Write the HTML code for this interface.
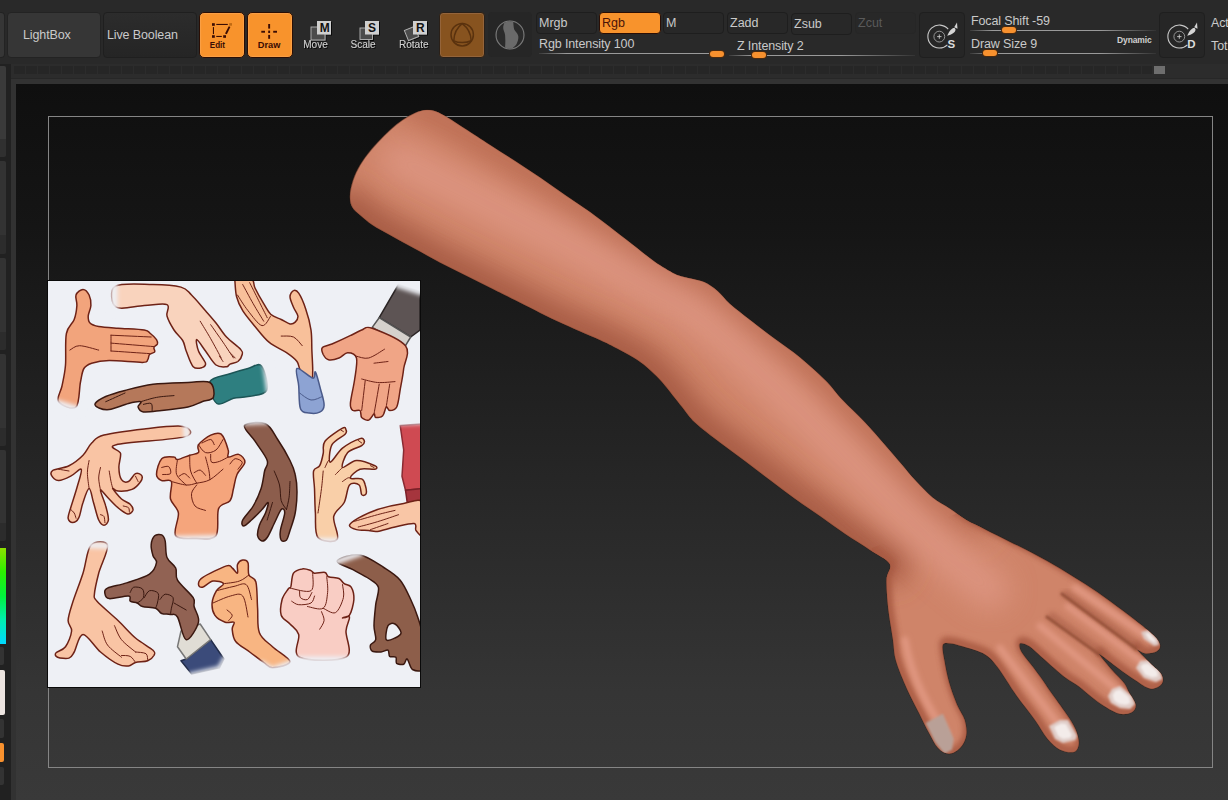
<!DOCTYPE html>
<html>
<head>
<meta charset="utf-8">
<title>ZBrush</title>
<style>
html,body{margin:0;padding:0;}
html{overflow:hidden;width:1228px;height:800px;}
body{width:1228px;height:800px;overflow:hidden;background:#272727;font-family:"Liberation Sans",sans-serif;position:relative;}
.abs{position:absolute;}
#top{position:absolute;left:0;top:0;width:1228px;height:64px;background:#292929;}
.btn{position:absolute;top:13px;height:44px;border-radius:4px;box-sizing:border-box;color:#c8c8c8;font-size:12.5px;}
.btn.grey{background:#363636;border:1px solid #232323;}
.btn.dark{background:linear-gradient(#2c2c2c,#252525);border:1px solid #1f1f1f;}
.btn.or{background:#f8912e;border:1px solid #3a2410;}
.lbl{position:absolute;white-space:nowrap;color:#cacaca;font-size:12.5px;line-height:13px;letter-spacing:-0.12px;}
.sm{position:absolute;top:12px;height:22px;width:61px;box-sizing:border-box;border-radius:4px;border:1px solid #1e1e1e;background:#282828;color:#cacaca;font-size:12.5px;line-height:21px;padding-left:2px;}
.line{position:absolute;height:1px;background:linear-gradient(90deg,#8a8a8a,#8a8a8a 70%,#3a3a3a);}
.hnd{position:absolute;width:14px;height:6px;border-radius:3px;background:#f8912e;box-shadow:0 0 0 1px #4a2a10;}
#strip{position:absolute;left:0;top:64px;width:1228px;height:14px;background:#2c2c2c;}
#canvas{position:absolute;left:11px;top:79px;width:1217px;height:721px;background:#323232;}
#cv{position:absolute;left:16px;top:84px;width:1212px;height:716px;background:linear-gradient(#0f0f0f,#151515 20%,#262626 55%,#353535 85%,#393939);overflow:hidden;}
</style>
</head>
<body>
<div id="top"></div>
<div id="strip"></div>
<div id="canvas"></div>
<div id="cv"></div>
<!-- frame -->
<div class="abs" style="left:48px;top:116px;width:1165px;height:652px;box-sizing:border-box;border:1px solid #858585;"></div>
<svg class="abs" style="left:16px;top:84px" width="1212" height="716" viewBox="16 84 1212 716">
<defs>
<path id="armp" d="M426.0 110.0 C429.5 109.8 432.4 110.2 436.0 111.5 C439.6 112.8 442.7 114.6 447.5 117.5 C452.3 120.4 457.9 124.2 465.0 128.8 C472.1 133.3 481.7 139.6 490.0 145.0 C498.3 150.4 506.7 155.6 515.0 161.0 C523.3 166.4 531.7 171.8 540.0 177.5 C548.3 183.2 556.7 189.2 565.0 195.0 C573.3 200.8 581.7 206.0 590.0 212.0 C598.3 218.0 607.2 225.0 615.0 231.0 C622.8 237.0 630.3 242.8 637.0 248.0 C643.7 253.2 648.7 257.7 655.0 262.0 C661.3 266.3 669.5 271.3 675.0 274.0 C680.5 276.7 683.2 276.7 688.0 278.0 C692.8 279.3 699.1 279.8 704.0 282.0 C708.9 284.2 713.2 287.3 717.5 291.0 C721.8 294.7 724.6 299.2 730.0 304.0 C735.4 308.8 742.5 314.2 750.0 320.0 C757.5 325.8 766.7 332.8 775.0 339.0 C783.3 345.2 791.7 350.7 800.0 357.5 C808.3 364.3 817.9 372.9 825.0 380.0 C832.1 387.1 835.8 392.9 842.5 400.0 C849.2 407.1 857.9 415.0 865.0 422.5 C872.1 430.0 879.2 438.3 885.0 445.0 C890.8 451.7 895.0 456.7 900.0 462.5 C905.0 468.3 909.6 474.2 915.0 480.0 C920.4 485.8 926.7 492.7 932.5 497.5 C938.3 502.3 944.4 505.0 950.0 508.8 C955.6 512.5 960.4 516.6 966.2 520.0 C972.1 523.4 977.7 525.7 985.0 529.4 C992.3 533.0 1001.7 537.7 1010.0 541.9 C1018.3 546.0 1026.7 549.9 1035.0 554.4 C1043.3 558.8 1051.7 563.5 1060.0 568.4 C1068.3 573.4 1076.7 578.6 1085.0 584.1 C1093.3 589.5 1101.7 595.3 1110.0 601.2 C1118.3 607.2 1127.7 614.3 1135.0 620.0 C1142.3 625.7 1149.6 631.5 1153.8 635.6 C1157.9 639.8 1159.5 642.4 1160.0 645.0 C1160.5 647.6 1159.2 649.8 1156.9 651.2 C1154.5 652.7 1149.1 653.6 1145.9 653.4 C1142.8 653.2 1139.7 650.8 1138.0 650.0 C1136.3 649.2 1135.2 647.5 1136.0 648.5 C1136.8 649.5 1140.6 653.5 1143.0 656.0 C1145.4 658.5 1147.5 660.6 1150.6 663.8 C1153.7 666.9 1159.7 671.3 1161.6 674.7 C1163.4 678.1 1163.4 681.7 1161.6 684.1 C1159.7 686.4 1155.1 689.4 1150.6 688.8 C1146.2 688.1 1140.4 683.5 1135.0 680.0 C1129.6 676.5 1123.7 672.2 1118.0 668.0 C1112.3 663.8 1104.0 657.1 1101.0 655.0 C1098.0 652.9 1098.2 653.0 1100.0 655.5 C1101.8 658.0 1108.0 665.4 1112.0 670.0 C1116.0 674.6 1121.2 679.4 1124.0 683.0 C1126.8 686.6 1126.8 688.3 1128.8 691.9 C1130.7 695.4 1135.1 701.0 1135.6 704.4 C1136.1 707.8 1134.6 710.6 1131.9 712.2 C1129.2 713.8 1124.0 714.8 1119.4 713.8 C1114.7 712.7 1108.7 708.9 1104.0 706.0 C1099.3 703.1 1095.2 699.8 1091.0 696.5 C1086.8 693.2 1083.2 689.6 1079.0 686.5 C1074.8 683.4 1070.2 681.1 1066.0 678.0 C1061.8 674.9 1058.2 671.6 1054.0 668.0 C1049.8 664.4 1045.2 660.2 1041.0 656.5 C1036.8 652.8 1032.5 648.2 1029.0 646.0 C1025.5 643.8 1021.2 642.5 1020.0 643.5 C1018.8 644.5 1019.3 648.1 1021.5 652.0 C1023.7 655.9 1029.5 662.3 1033.0 667.0 C1036.5 671.7 1039.5 675.8 1042.5 680.0 C1045.5 684.2 1047.0 686.9 1051.0 692.5 C1055.0 698.1 1062.1 707.6 1066.2 713.8 C1070.4 719.9 1073.5 724.4 1075.6 729.4 C1077.7 734.3 1079.0 739.7 1078.8 743.4 C1078.5 747.2 1077.2 750.8 1074.1 751.9 C1070.9 752.9 1064.4 751.9 1060.0 749.7 C1055.6 747.5 1051.7 743.7 1047.5 738.8 C1043.3 733.8 1040.2 727.3 1035.0 720.0 C1029.8 712.7 1022.5 703.9 1016.2 695.0 C1010.0 686.1 1002.7 673.6 997.5 666.9 C992.3 660.1 990.7 657.8 985.0 654.4 C979.3 651.0 968.9 648.4 963.1 646.6 C957.4 644.7 954.0 643.7 950.6 643.4 C947.2 643.2 943.9 642.1 942.8 645.0 C941.8 647.9 943.3 654.4 944.4 660.6 C945.4 666.9 947.0 675.2 949.1 682.5 C951.1 689.8 954.3 698.1 956.9 704.4 C959.5 710.6 963.1 714.8 964.7 720.0 C966.2 725.2 967.0 730.9 966.2 735.6 C965.5 740.3 962.9 745.1 960.0 748.1 C957.1 751.1 952.7 753.8 949.1 753.8 C945.4 753.8 941.5 751.7 938.1 748.1 C934.7 744.6 931.9 738.2 928.8 732.5 C925.6 726.8 923.0 721.0 919.4 713.8 C915.7 706.5 910.8 697.6 906.9 688.8 C903.0 679.9 898.3 669.0 895.9 660.6 C893.6 652.3 894.1 647.6 892.8 638.8 C891.5 629.9 889.2 617.4 888.1 607.5 C887.1 597.6 886.3 586.7 886.6 579.4 C886.8 572.1 892.4 568.6 889.7 563.8 C886.9 558.9 877.4 555.0 870.0 550.0 C862.6 545.0 853.3 539.4 845.0 533.8 C836.7 528.1 828.3 521.8 820.0 516.0 C811.7 510.2 803.3 504.8 795.0 498.8 C786.7 492.8 778.3 486.3 770.0 480.0 C761.7 473.7 753.3 467.2 745.0 461.0 C736.7 454.8 728.3 448.9 720.0 442.5 C711.7 436.1 701.2 428.3 695.0 422.5 C688.8 416.7 686.2 412.1 682.5 407.5 C678.8 402.9 675.8 399.2 672.5 395.0 C669.2 390.8 666.2 386.7 662.5 382.5 C658.8 378.3 654.2 373.8 650.0 370.0 C645.8 366.2 642.5 363.3 637.5 360.0 C632.5 356.7 626.2 353.3 620.0 350.0 C613.8 346.7 610.5 344.8 600.0 340.0 C589.5 335.2 571.2 327.7 557.0 321.0 C542.8 314.3 526.2 305.6 515.0 300.0 C503.8 294.4 498.3 291.7 490.0 287.5 C481.7 283.3 473.3 279.2 465.0 275.0 C456.7 270.8 448.3 266.9 440.0 262.5 C431.7 258.1 423.3 253.3 415.0 248.8 C406.7 244.2 397.1 239.0 390.0 235.0 C382.9 231.0 377.5 228.3 372.5 225.0 C367.5 221.7 363.3 217.9 360.0 215.0 C356.7 212.1 354.2 210.2 352.5 207.5 C350.8 204.8 350.2 202.3 350.0 199.0 C349.8 195.7 350.0 191.9 351.0 187.5 C352.0 183.1 353.7 177.5 356.0 172.5 C358.3 167.5 361.4 162.5 365.0 157.5 C368.6 152.5 373.3 147.1 377.5 142.5 C381.7 137.9 385.8 133.8 390.0 130.0 C394.2 126.2 398.3 122.8 402.5 120.0 C406.7 117.2 411.1 114.7 415.0 113.0 C418.9 111.3 422.5 110.2 426.0 110.0 Z"/>
<clipPath id="upper"><path d="M300 80 L1000 80 L1000 500 L880 610 L700 600 L300 300 Z"/></clipPath>
<clipPath id="lower"><path d="M990 500 L1228 500 L1228 800 L860 800 L872 548 Z"/></clipPath>
<clipPath id="armclip"><use href="#armp"/></clipPath>
<filter id="b14" x="-10%" y="-10%" width="120%" height="120%"><feGaussianBlur stdDeviation="14"/></filter>
<filter id="b9" x="-10%" y="-10%" width="120%" height="120%"><feGaussianBlur stdDeviation="9"/></filter>
<filter id="b5" x="-10%" y="-10%" width="120%" height="120%"><feGaussianBlur stdDeviation="5"/></filter>
<filter id="b3" x="-10%" y="-10%" width="120%" height="120%"><feGaussianBlur stdDeviation="2.5"/></filter>
<filter id="b1" x="-10%" y="-10%" width="120%" height="120%"><feGaussianBlur stdDeviation="1"/></filter>
</defs>
<!--ARM-->
<use href="#armp" fill="#cf8469" stroke="#3a1c12" stroke-width="1.2" stroke-opacity="0.5"/>
<g clip-path="url(#armclip)">
<path d="M405.0 94.0 C408.5 96.7 420.8 107.1 426.0 110.0 C431.2 112.9 432.4 110.2 436.0 111.5 C439.6 112.8 442.7 114.6 447.5 117.5 C452.3 120.4 457.9 124.2 465.0 128.8 C472.1 133.3 481.7 139.6 490.0 145.0 C498.3 150.4 506.7 155.6 515.0 161.0 C523.3 166.4 531.7 171.8 540.0 177.5 C548.3 183.2 556.7 189.2 565.0 195.0 C573.3 200.8 581.7 206.0 590.0 212.0 C598.3 218.0 607.2 225.0 615.0 231.0 C622.8 237.0 630.3 242.8 637.0 248.0 C643.7 253.2 648.7 257.7 655.0 262.0 C661.3 266.3 669.5 271.3 675.0 274.0 C680.5 276.7 683.2 276.7 688.0 278.0 C692.8 279.3 699.1 279.8 704.0 282.0 C708.9 284.2 713.2 287.3 717.5 291.0 C721.8 294.7 724.6 299.2 730.0 304.0 C735.4 308.8 742.5 314.2 750.0 320.0 C757.5 325.8 766.7 332.8 775.0 339.0 C783.3 345.2 791.7 350.7 800.0 357.5 C808.3 364.3 817.9 372.9 825.0 380.0 C832.1 387.1 835.8 392.9 842.5 400.0 C849.2 407.1 857.9 415.0 865.0 422.5 C872.1 430.0 879.2 438.3 885.0 445.0 C890.8 451.7 895.0 456.7 900.0 462.5 C905.0 468.3 909.6 474.2 915.0 480.0 C920.4 485.8 926.7 492.7 932.5 497.5 C938.3 502.3 941.2 503.7 950.0 508.8 C958.8 513.8 979.2 524.8 985.0 528.0" fill="none" stroke="#bc6d52" stroke-width="32" filter="url(#b14)"/>
<path d="M905.0 572.0 C899.2 568.3 880.0 556.4 870.0 550.0 C860.0 543.6 853.3 539.4 845.0 533.8 C836.7 528.1 828.3 521.8 820.0 516.0 C811.7 510.2 803.3 504.8 795.0 498.8 C786.7 492.8 778.3 486.3 770.0 480.0 C761.7 473.7 753.3 467.2 745.0 461.0 C736.7 454.8 728.3 448.9 720.0 442.5 C711.7 436.1 701.2 428.3 695.0 422.5 C688.8 416.7 686.2 412.1 682.5 407.5 C678.8 402.9 675.8 399.2 672.5 395.0 C669.2 390.8 666.2 386.7 662.5 382.5 C658.8 378.3 654.2 373.8 650.0 370.0 C645.8 366.2 642.5 363.3 637.5 360.0 C632.5 356.7 626.2 353.3 620.0 350.0 C613.8 346.7 610.5 344.8 600.0 340.0 C589.5 335.2 571.2 327.7 557.0 321.0 C542.8 314.3 526.2 305.6 515.0 300.0 C503.8 294.4 498.3 291.7 490.0 287.5 C481.7 283.3 473.3 279.2 465.0 275.0 C456.7 270.8 448.3 266.9 440.0 262.5 C431.7 258.1 423.3 253.3 415.0 248.8 C406.7 244.2 397.1 239.0 390.0 235.0 C382.9 231.0 377.5 228.3 372.5 225.0 C367.5 221.7 366.2 219.8 360.0 215.0 C353.8 210.2 339.2 199.2 335.0 196.0" fill="none" stroke="#a35740" stroke-width="34" filter="url(#b14)"/>
<g clip-path="url(#lower)"><use href="#armp" fill="none" stroke="#a85a42" stroke-width="9" filter="url(#b3)" transform="translate(1,-2)" opacity="0.85"/></g>
<path d="M400.0 160.0 C411.7 165.8 443.3 181.7 470.0 195.0 C496.7 208.3 531.7 225.3 560.0 240.0 C588.3 254.7 616.7 270.0 640.0 283.0 C663.3 296.0 680.0 303.2 700.0 318.0 C720.0 332.8 740.0 353.3 760.0 372.0 C780.0 390.7 800.0 410.3 820.0 430.0 C840.0 449.7 861.7 471.7 880.0 490.0 C898.3 508.3 911.7 523.3 930.0 540.0 C948.3 556.7 980.0 581.7 990.0 590.0" fill="none" stroke="#df9885" stroke-width="40" stroke-linecap="round" filter="url(#b14)" opacity="0.8"/>
<g fill="none" stroke="#e09680" stroke-width="7" stroke-linecap="round" filter="url(#b3)">
<path d="M1075 588 L1148 637"/><path d="M1068 606 L1150 668"/><path d="M1040 626 L1122 694"/><path d="M1000 648 L1064 732"/><path d="M905 640 C912 680 930 710 946 734"/>
</g>
<g fill="none" stroke="#a65c44" stroke-width="8" stroke-linecap="round" filter="url(#b3)" opacity="0.55"><path d="M1066 594 L1138 646"/><path d="M1052 616 L1102 652"/></g>
<g fill="none" stroke="#935039" stroke-width="3.2" stroke-linecap="round" filter="url(#b1)" opacity="0.9">
<path d="M1062 594 L1136 648.5"/><path d="M1047 617 L1100 655"/>
</g>
<g filter="url(#b1)">
<path d="M1141 632 L1148 630 L1158 639 L1159 645 L1154 646 L1144 639 Z" fill="#dcc8c3"/>
<path d="M1136 668 L1140 661 L1148 660 L1160 670 L1162.4 679 L1156 682 L1144 678 Z" fill="#dfccc7"/>
<path d="M1108 696 L1112 689 L1120 686 L1132 696 L1135 704 L1130 709 L1120 708 L1111 703 Z" fill="#e0cdc8"/>
<path d="M1049 726 L1060 720 L1068 720 L1077 735.6 L1075.6 740 L1063 743 L1055 739 Z" fill="#dfccc7"/>
<path d="M925.6 723 L942.8 713.75 L953.75 738.75 L952 749.7 L944.4 753.75 L935 742 Z" fill="#b9a097"/>
</g>
<g filter="url(#b1)" fill="#f3ecea">
<path d="M1145 633.5 L1149 633 L1155.5 640 L1155 643 L1149 639.5 Z"/>
<path d="M1140.5 667 L1143 664 L1148 663.5 L1157 671 L1158 676.5 L1152 677.5 L1145 674.5 Z"/>
<path d="M1112.5 695 L1115 691 L1120 689.5 L1129 697 L1130.5 703 L1126 705 L1119 704 L1114 700.5 Z"/>
<path d="M1054 727 L1061 723.5 L1066 724 L1072 735 L1070 738 L1063 739 L1058 736 Z"/>
</g>
</g>
</svg>
<svg class="abs" style="left:47px;top:280px" width="375" height="409" viewBox="47 280 375 409">
<defs><clipPath id="refclip"><rect x="48" y="281" width="372" height="406"/></clipPath>
<filter id="rb" x="-20%" y="-20%" width="140%" height="140%"><feGaussianBlur stdDeviation="2.2"/></filter></defs>
<rect x="47.5" y="280.5" width="373" height="407" fill="#eef0f5" stroke="#0a0a0a" stroke-width="1"/>
<g clip-path="url(#refclip)">
<path d="M115.4 286.2C121.5 282.5 142.1 284.4 153.0 284.5C163.9 284.6 174.6 285.4 181.0 287.1C187.4 288.9 187.4 291.1 191.5 295.0C195.6 298.9 201.4 306.1 205.5 310.7C209.6 315.4 212.5 318.6 216.0 323.0C219.5 327.4 222.4 332.6 226.5 337.0C230.6 341.4 237.9 346.3 240.5 349.2C243.1 352.2 242.7 352.4 242.2 354.5C241.8 356.5 239.9 359.9 237.9 361.5C235.8 363.1 231.9 363.2 230.0 364.1C228.1 365.0 228.8 366.6 226.5 366.7C224.1 366.9 219.5 367.6 216.0 365.0C212.5 362.4 208.7 355.2 205.5 351.0C202.3 346.8 197.9 339.6 196.7 339.6C195.6 339.6 197.0 347.1 198.5 351.0C199.9 354.9 204.9 360.5 205.5 363.2C206.1 366.0 204.0 367.0 202.0 367.6C199.9 368.2 195.9 369.5 193.2 366.7C190.6 364.0 188.0 355.4 186.2 351.0C184.5 346.6 184.8 344.0 182.7 340.5C180.7 337.0 176.6 334.1 174.0 330.0C171.4 325.9 168.2 320.2 167.0 316.0C165.8 311.8 170.8 306.4 167.0 304.6C163.2 302.9 152.7 305.1 144.2 305.5C135.8 305.9 121.1 310.5 116.2 307.2C111.4 304.0 109.2 290.0 115.4 286.2Z" fill="#f9d3bd" stroke="#6e2216" stroke-width="1.5" stroke-linejoin="round"/>
<path d="M200.2 321.2C202.0 324.2 207.2 332.6 210.7 338.7C214.2 344.9 219.5 354.8 221.2 358.0M210.7 324.7C212.8 327.7 219.2 336.7 223.0 342.2C226.8 347.8 231.7 355.4 233.5 358.0M219.5 356.2C220.1 357.1 222.4 360.6 223.0 361.5M230.0 352.7C230.9 353.6 234.4 357.1 235.2 358.0" fill="none" stroke="#6e2216" stroke-width="1.0" stroke-linecap="round"/>
<path d="M83.0 289.4C85.2 289.4 87.8 292.3 89.1 295.0C90.4 297.7 91.0 302.0 90.9 305.5C90.7 309.0 88.4 313.1 88.2 316.0C88.1 318.9 88.2 321.2 90.0 323.0C91.7 324.7 94.1 325.6 98.7 326.5C103.4 327.4 110.4 327.7 118.0 328.2C125.6 328.8 138.8 329.1 144.2 330.0C149.6 330.9 148.3 331.9 150.4 333.5C152.4 335.1 155.3 337.9 156.5 339.6C157.7 341.4 157.8 342.7 157.4 344.0C156.9 345.3 154.3 346.2 153.9 347.5C153.4 348.8 155.5 350.7 154.7 351.9C154.0 353.0 150.7 353.2 149.5 354.5C148.3 355.8 148.9 358.4 147.7 359.7C146.6 361.1 148.9 362.2 142.5 362.4C136.1 362.5 117.7 360.5 109.2 360.6C100.8 360.8 96.0 361.9 91.7 363.2C87.5 364.6 85.8 365.3 83.9 368.5C82.0 371.7 81.7 376.1 80.4 382.5C79.1 388.9 79.6 403.8 76.0 407.0C72.4 410.2 60.8 405.2 58.5 401.7C56.2 398.2 60.8 392.1 62.0 386.0C63.2 379.9 64.8 373.7 65.5 365.0C66.2 356.2 64.9 341.1 66.4 333.5C67.8 325.9 72.5 324.2 74.2 319.5C76.0 314.8 76.6 309.6 76.9 305.5C77.2 301.4 75.0 297.7 76.0 295.0C77.0 292.3 80.8 289.4 83.0 289.4Z" fill="#f2a47c" stroke="#6e2216" stroke-width="1.5" stroke-linejoin="round"/>
<path d="M111.0 335.2C117.7 335.5 144.5 336.7 151.2 337.0M111.0 343.1C118.1 343.7 146.7 346.0 153.9 346.6M111.0 351.0C117.4 351.4 143.1 353.2 149.5 353.6M111.0 335.2C111.0 337.9 111.0 348.4 111.0 351.0M69.9 350.1C71.5 349.4 74.7 345.7 79.5 345.7C84.3 345.7 95.5 349.4 98.7 350.1" fill="none" stroke="#6e2216" stroke-width="1.0" stroke-linecap="round"/>
<path d="M209.9 381.6C212.0 376.7 223.6 375.9 230.0 373.7C236.3 371.6 242.8 369.8 248.0 368.5C253.2 367.2 258.4 362.2 261.5 365.9C264.6 369.5 269.0 385.3 266.7 390.4C264.5 395.5 253.5 395.2 248.0 396.5C242.5 397.8 238.7 397.1 233.5 398.2C228.3 399.4 220.8 406.3 216.9 403.5C212.9 400.7 207.7 386.6 209.9 381.6Z" fill="#2e7f80" stroke="#1c5556" stroke-width="1.5" stroke-linejoin="round"/>
<path d="M95.2 403.5C96.4 401.6 100.8 398.7 105.7 396.5C110.7 394.3 117.1 392.4 125.0 390.4C132.9 388.3 142.5 385.5 153.0 384.2C163.5 382.9 178.5 382.8 188.0 382.5C197.5 382.2 205.6 380.0 209.9 382.5C214.1 385.0 214.7 394.2 213.4 397.4C212.0 400.6 206.2 400.1 202.0 401.7C197.8 403.3 194.7 405.5 188.0 407.0C181.3 408.4 169.2 409.7 161.7 410.5C154.3 411.3 147.3 412.5 143.4 411.9C139.4 411.3 138.6 408.7 138.1 407.0C137.7 405.3 142.3 402.3 140.7 401.7C139.1 401.2 133.7 402.2 128.5 403.5C123.2 404.8 114.2 408.9 109.2 409.6C104.3 410.3 101.1 408.9 98.7 407.9C96.4 406.8 94.1 405.4 95.2 403.5Z" fill="#b5785a" stroke="#3a1810" stroke-width="1.5" stroke-linejoin="round"/>
<path d="M105.7 401.7C109.0 400.3 121.8 394.4 125.0 393.0M140.7 401.7C143.4 401.0 150.9 398.4 156.5 397.4C162.0 396.3 171.1 395.9 174.0 395.6M143.4 404.4C144.7 404.2 149.8 402.5 151.2 403.5C152.7 404.5 152.0 409.3 152.1 410.5" fill="none" stroke="#3a1810" stroke-width="1.0" stroke-linecap="round"/>
<path d="M234.9 281.0C235.2 283.9 235.3 291.8 236.6 296.7C237.9 301.7 239.7 305.8 242.7 310.7C245.8 315.7 250.6 321.2 255.0 326.5C259.4 331.7 263.7 337.9 269.0 342.2C274.2 346.6 281.8 349.5 286.5 352.7C291.2 355.9 294.7 358.6 297.0 361.5C299.3 364.4 298.2 367.3 300.5 370.2C302.8 373.2 308.9 378.7 311.0 379.0C313.0 379.3 312.6 376.7 312.7 372.0C312.9 367.3 312.2 358.0 311.9 351.0C311.6 344.0 312.0 337.0 311.0 330.0C310.0 323.0 307.8 315.1 305.7 309.0C303.7 302.9 300.8 296.3 298.7 293.2C296.7 290.2 294.9 290.0 293.5 290.6C292.0 291.2 290.0 294.0 290.0 296.7C290.0 299.5 292.2 304.0 293.5 307.2C294.8 310.5 297.6 313.5 297.9 316.0C298.2 318.5 296.6 320.8 295.2 322.1C293.9 323.4 292.3 324.3 290.0 323.9C287.7 323.4 284.5 321.1 281.2 319.5C278.0 317.9 273.7 316.9 270.7 314.2C267.8 311.6 266.4 308.1 263.7 303.7C261.1 299.4 257.0 292.1 255.0 288.0C253.0 283.9 254.8 280.7 251.5 279.3C248.1 277.8 237.6 279.0 234.9 279.3C232.1 279.5 234.6 278.1 234.9 281.0Z" fill="#f8c09a" stroke="#6e2216" stroke-width="1.5" stroke-linejoin="round"/>
<path d="M242.7 284.5C244.5 287.7 249.7 297.6 253.2 303.7C256.7 309.9 262.0 318.3 263.7 321.2M249.7 282.7C251.2 285.7 255.6 294.4 258.5 300.2C261.4 306.1 265.8 314.8 267.2 317.7M237.5 295.0C239.2 297.6 243.9 305.6 248.0 310.7C252.1 315.8 258.2 324.7 262.0 325.6C265.8 326.5 269.3 317.6 270.7 316.0M281.2 336.1C283.3 336.3 290.0 335.4 293.5 337.0C297.0 338.6 300.8 344.3 302.2 345.7" fill="none" stroke="#6e2216" stroke-width="1.0" stroke-linecap="round"/>
<path d="M297.0 368.5C299.3 367.2 309.7 377.5 312.7 378.1C315.8 378.7 314.1 370.1 315.4 372.0C316.7 373.9 319.2 383.9 320.6 389.5C322.1 395.0 324.3 401.4 324.1 405.2C324.0 409.0 322.2 410.9 319.7 412.2C317.3 413.5 312.4 413.7 309.2 413.1C306.0 412.5 302.2 413.3 300.5 408.7C298.7 404.2 299.3 392.7 298.7 386.0C298.2 379.3 294.7 369.8 297.0 368.5Z" fill="#8da3d3" stroke="#4a5a8a" stroke-width="1.5" stroke-linejoin="round"/>
<path d="M299.6 393.0C301.5 394.2 307.2 399.4 311.0 400.0C314.8 400.6 320.5 397.1 322.4 396.5" fill="none" stroke="#4a5a8a" stroke-width="1.0" stroke-linecap="round"/>
<path d="M379.2 317.7L398.5 284.5L420.0 291.5L420.0 330.0L410.7 337.0Z" fill="#5d5454" stroke="#2a2424" stroke-width="1.5" stroke-linejoin="round"/>
<path d="M372.2 327.4L379.2 317.7L410.7 337.0L405.5 345.7Z" fill="#d5d1cc" stroke="#555" stroke-width="1.5" stroke-linejoin="round"/>
<path d="M322.4 347.5C323.8 345.7 327.2 346.0 332.0 344.0C336.8 342.0 346.3 337.6 351.2 335.2C356.2 332.9 358.2 331.2 361.7 330.0C365.2 328.8 364.9 325.6 372.2 328.2C379.5 330.9 400.2 339.0 405.5 345.7C410.7 352.4 404.6 361.2 403.7 368.5C402.9 375.8 401.4 383.1 400.2 389.5C399.1 395.9 398.5 403.5 396.7 407.0C395.0 410.5 391.5 410.5 389.7 410.5C388.0 410.5 387.4 406.1 386.2 407.0C385.1 407.9 384.5 414.0 382.7 415.7C381.0 417.5 377.2 417.8 375.7 417.5C374.3 417.2 375.1 413.5 374.0 414.0C372.8 414.4 370.8 419.5 368.7 420.1C366.7 420.7 363.2 419.1 361.7 417.5C360.3 415.9 361.4 411.7 360.0 410.5C358.5 409.3 354.6 411.7 353.0 410.5C351.4 409.3 350.1 408.7 350.4 403.5C350.7 398.2 353.7 386.6 354.7 379.0C355.8 371.4 357.6 362.4 356.5 358.0C355.3 353.6 350.7 352.7 347.7 352.7C344.8 352.7 342.2 356.8 339.0 358.0C335.8 359.2 331.1 360.3 328.5 359.7C325.9 359.2 324.3 356.5 323.2 354.5C322.2 352.4 320.9 349.2 322.4 347.5Z" fill="#f0a586" stroke="#6e2216" stroke-width="1.5" stroke-linejoin="round"/>
<path d="M356.5 356.2C358.5 356.5 364.1 359.2 368.7 358.0C373.4 356.8 381.9 350.7 384.5 349.2M365.2 380.7C364.6 385.7 362.3 405.5 361.7 410.5M379.2 384.2C378.4 389.2 374.9 409.0 374.0 414.0M389.7 384.2C389.1 388.0 386.8 403.2 386.2 407.0M361.7 379.0C364.4 379.6 371.9 382.0 377.5 382.5C383.0 382.9 392.1 381.8 395.0 381.6M374.0 363.2C376.3 362.9 385.6 361.8 388.0 361.5" fill="none" stroke="#6e2216" stroke-width="1.0" stroke-linecap="round"/>
<path d="M116.2 444.7C126.9 442.0 173.4 439.9 184.5 436.9C195.6 433.8 189.4 427.7 182.7 426.4C176.0 425.1 157.4 427.5 144.2 429.0C131.1 430.5 112.7 432.8 104.0 435.1C95.2 437.5 95.2 439.6 91.7 443.0C88.2 446.4 86.8 451.5 83.0 455.2C79.2 459.0 74.0 463.3 69.0 465.7C64.0 468.2 56.2 468.5 53.2 470.1C50.3 471.7 50.6 473.6 51.5 475.4C52.4 477.1 55.3 480.5 58.5 480.6C61.7 480.8 67.0 478.1 70.7 476.2C74.5 474.3 80.1 467.8 81.2 469.2C82.4 470.7 79.5 478.6 77.7 485.0C76.0 491.4 72.4 502.2 70.7 507.7C69.1 513.3 67.8 515.8 68.1 518.2C68.4 520.7 70.7 522.6 72.5 522.6C74.2 522.6 76.9 521.6 78.6 518.2C80.4 514.9 81.2 507.4 83.0 502.5C84.7 497.5 87.4 488.5 89.1 488.5C90.9 488.5 91.9 497.2 93.5 502.5C95.1 507.7 97.0 516.2 98.7 520.0C100.5 523.8 102.4 525.2 104.0 525.2C105.6 525.2 108.1 523.2 108.4 520.0C108.7 516.8 107.1 510.9 105.7 506.0C104.4 501.0 100.2 491.7 100.5 490.2C100.8 488.8 104.6 494.3 107.5 497.2C110.4 500.2 114.6 505.0 118.0 507.7C121.3 510.5 125.1 513.4 127.6 513.9C130.1 514.3 132.4 512.0 132.9 510.4C133.3 508.8 132.1 506.1 130.2 504.2C128.3 502.3 124.4 501.6 121.5 499.0C118.6 496.4 113.3 489.8 112.7 488.5C112.2 487.2 114.8 491.0 118.0 491.1C121.2 491.3 128.2 491.0 132.0 489.4C135.8 487.8 139.1 483.8 140.7 481.5C142.3 479.2 142.5 476.7 141.6 475.4C140.7 474.1 137.7 472.6 135.5 473.6C133.3 474.6 130.8 480.5 128.5 481.5C126.2 482.5 123.1 482.1 121.5 479.7C119.9 477.4 119.0 471.9 118.9 467.5C118.7 463.1 121.1 457.3 120.6 453.5C120.2 449.7 105.6 447.5 116.2 444.7Z" fill="#f9c4a4" stroke="#6e2216" stroke-width="1.5" stroke-linejoin="round"/>
<path d="M89.1 460.5C88.8 462.5 87.4 468.1 87.4 472.7C87.4 477.4 88.8 485.9 89.1 488.5M100.5 467.5C100.2 469.2 98.7 474.2 98.7 478.0C98.7 481.8 100.2 488.2 100.5 490.2M109.2 471.0C109.5 472.7 110.4 478.6 111.0 481.5C111.6 484.4 112.5 487.3 112.7 488.5M70.7 509.5C71.3 510.1 73.4 511.5 74.2 513.0C75.1 514.4 75.7 517.4 76.0 518.2M100.5 514.7C101.1 515.0 103.3 515.2 104.0 516.5C104.7 517.8 104.7 521.6 104.9 522.6M123.2 506.0C124.1 506.3 127.5 506.7 128.5 507.7C129.5 508.8 129.2 511.4 129.4 512.1M58.5 469.2C60.2 469.5 67.2 470.7 69.0 471.0M135.5 476.2C135.9 477.1 137.7 480.6 138.1 481.5" fill="none" stroke="#6e2216" stroke-width="1.0" stroke-linecap="round"/>
<path d="M175.7 535.7C172.7 531.5 179.2 519.1 178.4 513.0C177.5 506.9 171.7 504.2 170.5 499.0C169.3 493.7 172.8 484.6 171.4 481.5C169.9 478.4 164.2 481.8 161.7 480.6C159.3 479.5 156.5 478.1 156.5 474.5C156.5 470.8 158.8 461.7 161.7 458.7C164.7 455.8 171.4 456.8 174.0 457.0C176.6 457.1 174.9 459.9 177.5 459.6C180.1 459.3 186.2 456.4 189.7 455.2C193.2 454.1 197.0 454.4 198.5 452.6C199.9 450.9 196.4 447.7 198.5 444.7C200.5 441.8 206.9 436.9 210.7 435.1C214.5 433.4 218.3 431.8 221.2 434.2C224.1 436.7 227.1 446.2 228.2 450.0C229.4 453.8 226.5 456.3 228.2 457.0C230.0 457.7 236.0 453.5 238.7 454.4C241.5 455.2 245.1 458.9 244.9 462.2C244.6 465.6 238.9 470.1 237.0 474.5C235.1 478.9 234.6 484.1 233.5 488.5C232.3 492.9 232.5 497.4 230.0 500.7C227.5 504.1 220.9 502.8 218.6 508.6C216.3 514.4 219.6 530.8 216.0 535.7C212.3 540.7 203.4 538.4 196.7 538.4C190.0 538.4 178.8 540.0 175.7 535.7Z" fill="#f5a57c" stroke="#6e2216" stroke-width="1.5" stroke-linejoin="round"/>
<path d="M177.5 459.6C177.3 462.1 175.2 470.3 176.6 474.5C178.1 478.7 184.6 483.2 186.2 485.0M189.7 455.2C189.9 457.9 189.4 466.3 190.6 471.0C191.8 475.7 195.7 481.2 196.7 483.2M205.5 457.0C206.1 459.3 208.3 467.2 209.0 471.0C209.7 474.8 209.7 478.3 209.9 479.7M171.4 481.5C173.8 482.1 182.0 484.7 186.2 485.0C190.5 485.3 192.8 484.1 196.7 483.2C200.7 482.4 205.5 482.1 209.9 479.7C214.2 477.4 220.8 471.0 223.0 469.2M196.7 485.0C195.9 486.4 191.8 490.2 191.5 493.7C191.2 497.2 192.6 503.2 195.0 506.0C197.3 508.8 203.7 509.6 205.5 510.4M198.5 444.7C199.6 446.1 202.6 451.7 205.5 452.6C208.4 453.5 213.1 452.2 216.0 450.0C218.9 447.8 221.8 441.2 223.0 439.5M161.7 467.5C162.9 467.3 167.3 465.6 168.7 466.6C170.2 467.6 171.5 472.3 170.5 473.6C169.5 474.9 163.9 474.3 162.6 474.5M179.2 476.2C180.1 475.8 182.7 473.3 184.5 473.6C186.2 473.9 188.9 477.3 189.7 478.0M194.1 472.7C195.1 472.3 198.3 469.7 200.2 470.1C202.1 470.6 204.6 474.5 205.5 475.4M202.0 443.0C203.4 442.4 208.7 439.2 210.7 439.5C212.8 439.8 213.6 443.9 214.2 444.7M230.0 464.0C230.9 463.1 233.2 459.0 235.2 458.7C237.3 458.5 241.8 460.5 242.2 462.2C242.7 464.0 238.6 468.1 237.9 469.2M210.7 454.4C210.9 455.7 210.1 461.1 211.6 462.2C213.1 463.4 216.7 462.2 219.5 461.4C222.2 460.5 226.8 457.7 228.2 457.0" fill="none" stroke="#6e2216" stroke-width="1.0" stroke-linecap="round"/>
<path d="M244.5 425.5C246.2 422.6 260.0 421.4 265.5 423.7C271.0 426.1 273.7 433.4 277.7 439.5C281.8 445.6 287.1 454.7 290.0 460.5C292.9 466.3 294.1 469.2 295.2 474.5C296.4 479.7 297.0 485.6 297.0 492.0C297.0 498.4 296.4 506.6 295.2 513.0C294.1 519.4 291.4 526.0 290.0 530.5C288.5 535.0 287.9 538.5 286.5 540.1C285.0 541.7 282.3 541.7 281.2 540.1C280.2 538.5 279.8 535.0 280.4 530.5C281.0 526.0 284.6 516.5 284.7 513.0C284.9 509.5 283.0 507.7 281.2 509.5C279.5 511.2 276.6 518.8 274.2 523.5C271.9 528.2 269.3 534.6 267.2 537.5C265.2 540.4 263.6 541.3 262.0 541.0C260.4 540.7 258.1 538.4 257.6 535.7C257.2 533.1 258.1 529.0 259.4 525.2C260.7 521.4 264.0 516.8 265.5 513.0C267.0 509.2 268.7 503.1 268.1 502.5C267.5 501.9 264.8 506.6 262.0 509.5C259.2 512.4 254.6 517.2 251.5 520.0C248.4 522.8 245.1 526.1 243.6 526.1C242.2 526.1 241.1 523.3 242.7 520.0C244.4 516.6 250.2 511.2 253.2 506.0C256.3 500.7 259.2 494.3 261.1 488.5C263.0 482.7 263.6 475.7 264.6 471.0C265.6 466.3 268.8 465.5 267.2 460.5C265.6 455.5 258.8 447.1 255.0 441.2C251.2 435.4 242.7 428.4 244.5 425.5Z" fill="#8c5d4c" stroke="#3a1810" stroke-width="1.5" stroke-linejoin="round"/>
<path d="M274.2 471.0C275.1 473.3 278.3 480.0 279.5 485.0C280.7 489.9 280.1 496.7 281.2 500.7C282.4 504.8 285.6 508.0 286.5 509.5M272.5 502.5C271.6 505.4 268.1 517.1 267.2 520.0M290.0 481.5C289.8 484.1 289.7 492.6 289.1 497.2C288.5 501.9 286.9 507.4 286.5 509.5" fill="none" stroke="#3a1810" stroke-width="1.0" stroke-linecap="round"/>
<path d="M318.0 537.5C314.3 533.1 315.9 521.2 315.4 513.0C314.8 504.8 314.8 495.5 314.5 488.5C314.2 481.5 312.7 474.8 313.6 471.0C314.5 467.2 318.1 468.7 319.7 465.7C321.3 462.8 322.4 457.6 323.2 453.5C324.1 449.4 321.8 445.5 325.0 441.2C328.2 437.0 339.0 430.0 342.5 428.1C346.0 426.2 345.5 428.9 346.0 429.9C346.4 430.9 347.4 431.8 345.1 434.2C342.8 436.7 334.5 440.1 332.0 444.7C329.5 449.4 328.5 461.7 330.2 462.2C332.0 462.8 337.5 452.2 342.5 448.2C347.4 444.3 356.3 439.8 360.0 438.6C363.6 437.5 364.1 440.1 364.4 441.2C364.6 442.4 364.5 443.7 361.7 445.6C359.0 447.5 350.9 449.0 347.7 452.6C344.5 456.3 341.0 466.2 342.5 467.5C343.9 468.8 351.1 460.8 356.5 460.5C361.9 460.2 371.8 464.3 374.9 465.7C377.9 467.2 377.3 468.7 374.9 469.2C372.4 469.8 364.1 467.8 360.0 469.2C355.9 470.7 350.1 476.4 350.4 478.0C350.7 479.6 359.3 477.7 361.7 478.9C364.2 480.0 364.5 482.5 365.2 485.0C366.0 487.5 366.7 492.1 366.1 493.7C365.5 495.3 362.9 496.1 361.7 494.6C360.6 493.2 361.1 486.6 359.1 485.0C357.1 483.4 352.0 482.1 349.5 485.0C347.0 487.9 346.9 497.2 344.2 502.5C341.6 507.7 334.9 510.4 333.7 516.5C332.6 522.6 339.9 535.7 337.2 539.2C334.6 542.7 321.6 541.9 318.0 537.5Z" fill="#f9cfa8" stroke="#6e2216" stroke-width="1.5" stroke-linejoin="round"/>
<path d="M325.0 467.5C325.6 466.3 327.6 461.4 328.5 460.5C329.4 459.6 329.9 462.0 330.2 462.2M335.5 474.5C336.4 473.6 339.6 470.4 340.7 469.2C341.9 468.1 342.2 467.8 342.5 467.5M342.5 481.5C343.4 480.9 346.4 478.6 347.7 478.0C349.0 477.4 349.9 478.0 350.4 478.0M323.2 471.0C322.9 473.9 322.4 481.5 321.5 488.5C320.6 495.5 318.6 508.9 318.0 513.0M340.7 429.9C341.2 430.2 342.9 431.3 343.4 431.6M358.2 440.4C358.8 440.8 361.1 442.6 361.7 443.0M370.5 465.7C371.1 466.0 373.4 467.2 374.0 467.5" fill="none" stroke="#6e2216" stroke-width="1.0" stroke-linecap="round"/>
<path d="M400.2 425.5L423.0 423.7L423.0 488.5L405.5 490.2L402.0 476.2L403.7 450.0Z" fill="#cf4a52" stroke="#8a2a32" stroke-width="1.5" stroke-linejoin="round"/>
<path d="M405.5 490.2L423.0 488.5L423.0 504.2L407.2 502.5Z" fill="#a5353d" stroke="#7a2028" stroke-width="1.5" stroke-linejoin="round"/>
<path d="M349.5 525.2C349.8 523.3 353.6 520.9 358.2 518.2C362.9 515.6 369.9 512.0 377.5 509.5C385.1 507.0 396.1 504.5 403.7 503.4C411.3 502.2 419.8 497.4 423.0 502.5C426.2 507.6 424.1 529.3 423.0 534.0C421.8 538.7 417.4 532.2 416.0 530.5C414.5 528.7 417.7 524.1 414.2 523.5C410.7 522.9 401.1 525.7 395.0 527.0C388.9 528.3 381.9 530.8 377.5 531.4C373.1 531.9 372.2 530.8 368.7 530.5C365.2 530.2 359.7 530.5 356.5 529.6C353.3 528.7 349.2 527.1 349.5 525.2Z" fill="#f9c6a6" stroke="#6e2216" stroke-width="1.5" stroke-linejoin="round"/>
<path d="M353.0 521.7C357.1 520.6 370.5 516.6 377.5 514.7C384.5 512.8 392.1 511.1 395.0 510.4M358.2 527.0C361.4 526.1 370.8 523.8 377.5 521.7C384.2 519.7 395.0 515.9 398.5 514.7M370.5 529.6C373.4 528.6 385.1 524.5 388.0 523.5" fill="none" stroke="#6e2216" stroke-width="1.0" stroke-linecap="round"/>
<path d="M90.9 545.3C95.0 540.6 106.2 540.6 107.5 545.3C108.8 549.9 100.9 565.1 98.7 573.2C96.6 581.4 94.7 589.6 94.4 594.2C94.1 598.9 93.1 596.9 97.0 601.2C100.9 605.6 111.6 614.4 118.0 620.5C124.4 626.6 129.7 633.0 135.5 638.0C141.3 642.9 149.9 647.3 153.0 650.2C156.0 653.2 154.7 653.7 153.9 655.5C153.0 657.2 150.8 659.6 147.7 660.7C144.7 661.9 138.7 661.6 135.5 662.5C132.3 663.4 131.4 665.7 128.5 666.0C125.6 666.3 122.7 666.6 118.0 664.2C113.3 661.9 106.3 656.9 100.5 652.0C94.7 647.0 87.4 634.5 83.0 634.5C78.6 634.5 76.6 648.0 74.2 652.0C71.9 655.9 71.8 657.2 69.0 658.1C66.2 659.0 59.8 658.1 57.6 657.2C55.4 656.4 54.6 654.6 55.9 652.9C57.2 651.1 62.9 650.4 65.5 646.7C68.1 643.1 71.2 635.4 71.6 631.0C72.1 626.6 68.0 625.2 68.1 620.5C68.3 615.8 70.0 610.9 72.5 603.0C75.0 595.1 79.9 582.9 83.0 573.2C86.1 563.6 86.8 549.9 90.9 545.3Z" fill="#f9c4a4" stroke="#6e2216" stroke-width="1.5" stroke-linejoin="round"/>
<path d="M102.2 631.0C103.1 633.3 104.3 640.6 107.5 645.0C110.7 649.4 119.2 655.2 121.5 657.2M114.5 625.7C115.7 628.1 118.0 635.4 121.5 639.7C125.0 644.1 133.2 649.9 135.5 652.0M121.5 655.5C122.9 655.6 127.9 655.2 130.2 656.4C132.6 657.5 134.6 661.5 135.5 662.5M135.5 652.0C137.2 652.3 143.9 652.3 146.0 653.7C148.0 655.2 147.4 659.6 147.7 660.7" fill="none" stroke="#6e2216" stroke-width="1.0" stroke-linecap="round"/>
<path d="M186.2 659.0L210.7 639.7L223.9 659.0L219.5 667.7L191.5 673.9L181.0 660.7Z" fill="#3b4b7a" stroke="#222c4a" stroke-width="1.5" stroke-linejoin="round"/>
<path d="M181.0 631.0L200.2 624.0L210.7 639.7L186.2 659.0L177.5 646.7Z" fill="#e0ddd5" stroke="#777" stroke-width="1.5" stroke-linejoin="round"/>
<path d="M151.2 544.6C151.5 541.2 153.0 537.4 154.7 535.8C156.5 534.2 160.0 534.1 161.7 534.9C163.5 535.8 164.4 537.3 165.2 541.1C166.1 544.8 165.2 553.0 167.0 557.5C168.7 562.0 174.0 564.2 175.7 568.0C177.5 571.8 174.6 575.3 177.5 580.2C180.4 585.2 190.5 593.4 193.2 597.7C196.0 602.1 193.2 602.4 194.1 606.5C195.0 610.6 199.8 616.7 198.5 622.2C197.2 627.8 189.7 640.6 186.2 639.7C182.7 638.9 180.1 621.2 177.5 617.0C174.9 612.8 173.1 614.9 170.5 614.4C167.9 613.8 164.2 614.5 161.7 613.5C159.3 612.5 158.8 609.4 155.6 608.2C152.4 607.1 145.6 607.4 142.5 606.5C139.4 605.6 139.3 603.9 137.2 603.0C135.2 602.1 131.7 602.4 130.2 601.2C128.8 600.1 132.0 596.4 128.5 596.0C125.0 595.6 113.2 599.1 109.2 598.6C105.3 598.2 105.2 595.1 104.9 593.4C104.6 591.6 103.8 589.9 107.5 588.1C111.1 586.4 119.7 585.2 126.7 582.9C133.7 580.5 144.5 577.5 149.5 574.1C154.4 570.8 155.9 565.8 156.5 562.7C157.1 559.7 153.9 558.8 153.0 555.7C152.1 552.7 150.9 547.9 151.2 544.6Z" fill="#916253" stroke="#3a1810" stroke-width="1.5" stroke-linejoin="round"/>
<path d="M130.2 592.5C130.8 591.6 131.7 587.8 133.7 587.2C135.8 586.7 140.9 587.2 142.5 589.0C144.1 590.7 144.2 595.4 143.4 597.7C142.5 600.1 138.3 602.1 137.2 603.0M144.2 597.7C145.1 596.6 147.2 591.5 149.5 590.7C151.8 590.0 156.9 591.3 158.2 593.4C159.5 595.4 157.8 600.5 157.4 603.0C156.9 605.5 155.9 607.4 155.6 608.2M160.0 599.5C160.9 598.6 163.0 594.5 165.2 594.2C167.4 594.0 172.1 595.4 173.1 597.7C174.1 600.1 171.8 605.5 171.4 608.2C170.9 611.0 170.6 613.3 170.5 614.4M174.0 603.0C176.0 604.2 184.2 608.8 186.2 610.0" fill="none" stroke="#3a1810" stroke-width="1.0" stroke-linecap="round"/>
<path d="M198.5 584.6C198.5 583.0 197.8 580.7 202.5 577.6C207.2 574.5 221.5 567.5 226.5 565.9C231.4 564.3 230.4 566.8 232.2 568.0C234.1 569.2 236.6 573.8 237.5 573.2C238.4 572.7 236.6 566.7 237.5 564.5C238.4 562.3 241.0 560.4 242.7 560.1C244.5 559.8 247.0 560.3 248.0 562.7C249.0 565.2 247.6 571.8 248.9 575.0C250.2 578.2 254.4 576.5 255.9 582.0C257.3 587.5 257.0 599.8 257.6 608.2C258.2 616.7 256.9 626.3 259.4 632.7C261.8 639.2 267.4 641.9 272.5 646.7C277.6 651.5 290.0 658.1 290.0 661.6C290.0 665.1 276.9 667.6 272.5 667.7C268.1 667.9 267.5 665.1 263.7 662.5C260.0 659.9 254.4 655.5 249.7 652.0C245.1 648.5 238.7 645.3 235.7 641.5C232.8 637.7 232.5 632.4 232.2 629.2C232.0 626.0 235.2 623.4 234.0 622.2C232.8 621.1 228.5 623.4 225.2 622.2C222.0 621.1 216.9 618.4 214.8 615.2C212.6 612.0 211.8 607.1 212.1 603.0C212.4 598.9 214.6 594.0 216.5 590.7C218.4 587.5 224.1 585.3 223.5 583.7C222.9 582.1 216.5 580.5 213.0 581.1C209.5 581.7 204.9 586.7 202.5 587.2C200.1 587.8 198.5 586.2 198.5 584.6Z" fill="#f8b582" stroke="#6e2216" stroke-width="1.5" stroke-linejoin="round"/>
<path d="M223.5 583.7C226.1 583.3 235.0 582.6 239.2 581.1C243.5 579.7 247.3 576.0 248.9 575.0M216.5 590.7C219.4 590.0 229.0 587.4 234.0 586.4C239.0 585.3 243.3 582.4 246.2 584.6C249.2 586.8 250.6 597.0 251.5 599.5M213.0 603.0C215.9 601.8 225.5 597.2 230.5 596.0C235.5 594.8 239.8 592.5 242.7 596.0C245.7 599.5 247.1 613.5 248.0 617.0M227.0 610.0C227.9 610.9 232.0 613.5 232.2 615.2C232.5 617.0 229.3 619.6 228.7 620.5" fill="none" stroke="#6e2216" stroke-width="1.0" stroke-linecap="round"/>
<path d="M299.6 657.2C291.7 653.4 300.3 640.0 298.7 634.5C297.1 628.9 292.9 627.2 290.0 624.0C287.1 620.8 282.6 619.3 281.2 615.2C279.9 611.2 281.0 603.9 282.1 599.5C283.3 595.1 286.8 591.2 288.2 589.0C289.7 586.8 290.0 589.0 290.9 586.4C291.7 583.7 291.6 576.2 293.5 573.2C295.4 570.3 299.3 569.3 302.2 568.9C305.2 568.4 308.9 569.9 311.0 570.6C313.0 571.4 312.2 573.0 314.5 573.2C316.8 573.5 322.7 571.8 325.0 572.4C327.3 573.0 326.2 575.7 328.5 576.7C330.8 577.8 336.4 577.3 339.0 578.5C341.6 579.7 342.2 582.3 344.2 583.7C346.3 585.2 349.6 584.6 351.2 587.2C352.8 589.9 354.1 594.8 353.9 599.5C353.6 604.2 351.4 612.2 349.5 615.2C347.6 618.3 342.5 617.6 342.5 617.9C342.5 618.2 348.9 614.8 349.5 617.0C350.1 619.2 346.6 624.3 346.0 631.0C345.4 637.7 353.7 652.9 346.0 657.2C338.3 661.6 307.5 661.0 299.6 657.2Z" fill="#f9cdc4" stroke="#6e2216" stroke-width="1.5" stroke-linejoin="round"/>
<path d="M312.7 573.2C312.4 576.2 314.8 588.3 311.0 590.7C307.2 593.2 293.5 588.6 290.0 588.1M326.7 576.7C326.9 579.4 328.2 587.2 327.6 592.5C327.0 597.7 326.6 605.9 323.2 608.2C319.9 610.6 310.1 606.8 307.5 606.5M342.5 584.6C342.6 586.8 344.5 593.1 343.4 597.7C342.2 602.4 338.8 610.9 335.5 612.6C332.1 614.4 325.3 609.0 323.2 608.2M299.6 590.7C299.8 591.9 299.2 596.3 300.5 597.7C301.8 599.2 305.6 600.4 307.5 599.5C309.4 598.6 311.1 593.7 311.9 592.5M291.7 601.2C292.9 601.8 295.5 604.5 298.7 604.7C301.9 605.0 308.4 604.5 311.0 603.0C313.6 601.5 313.9 597.2 314.5 596.0M321.5 611.7C321.9 613.2 324.4 617.6 324.1 620.5C323.8 623.4 320.5 627.8 319.7 629.2" fill="none" stroke="#6e2216" stroke-width="1.0" stroke-linecap="round"/>
<path d="M337.2 561.0C338.4 558.5 352.1 553.7 360.0 554.9C367.9 556.0 377.8 563.8 384.5 568.0C391.2 572.2 395.9 575.0 400.2 580.2C404.6 585.5 407.8 593.4 410.7 599.5C413.6 605.6 415.7 610.6 417.7 617.0C419.8 623.4 422.1 629.5 423.0 638.0C423.8 646.4 424.7 662.5 423.0 667.7C421.2 673.0 415.1 670.9 412.5 669.5C409.9 668.0 408.7 659.9 407.2 659.0C405.8 658.1 405.5 663.5 403.7 664.2C402.0 665.0 398.0 664.5 396.7 663.4C395.4 662.2 397.0 658.4 395.9 657.2C394.7 656.1 391.0 657.5 389.7 656.4C388.4 655.2 389.4 651.0 388.0 650.2C386.5 649.5 383.6 651.8 381.0 652.0C378.4 652.1 374.0 652.3 372.2 651.1C370.5 649.9 369.9 646.9 370.5 645.0C371.1 643.1 375.1 642.9 375.7 639.7C376.3 636.5 374.0 631.6 374.0 625.7C374.0 619.9 375.0 611.2 375.7 604.7C376.5 598.3 379.5 591.6 378.4 587.2C377.2 582.9 373.0 581.4 368.7 578.5C364.5 575.6 358.2 572.7 353.0 569.7C347.7 566.8 336.1 563.5 337.2 561.0Z" fill="#8d5e4a" stroke="#3a1810" stroke-width="1.5" stroke-linejoin="round"/>
<path d="M388.0 625.7C389.4 623.1 392.8 622.8 395.0 624.0C397.2 625.2 401.1 630.4 401.1 632.7C401.1 635.1 397.5 636.8 395.0 638.0C392.5 639.2 387.4 641.8 386.2 639.7C385.1 637.7 386.5 628.4 388.0 625.7Z" fill="#eef0f5" stroke="#3a1810" stroke-width="1.5" stroke-linejoin="round"/>
<g stroke="#eef0f5" fill="none" stroke-linecap="round" filter="url(#rb)">
<path d="M56 403 L79 410" stroke-width="7"/>
<path d="M114 283 L114 310" stroke-width="7"/>
<path d="M266 363 L270 393" stroke-width="7"/>
<path d="M397 283 L422 291" stroke-width="9"/>
<path d="M186 423 L187 440" stroke-width="6"/>
<path d="M173 539 L219 538" stroke-width="6"/>
<path d="M242 422 L268 421" stroke-width="6"/>
<path d="M315 541 L340 541" stroke-width="6"/>
<path d="M398 422 L422 421" stroke-width="6"/>
<path d="M88 545 L110 546" stroke-width="6"/>
<path d="M190 676 L220 669 L226 658" stroke-width="6"/>
<path d="M262 664 L272 670 L292 663" stroke-width="6"/>
<path d="M296 660 L349 660" stroke-width="7"/>
<path d="M335 562 L361 553" stroke-width="6"/>
</g>
</g>
</svg>


<!-- strip squares -->
<div class="abs" style="left:14px;top:66px;width:1138px;height:8px;background:repeating-linear-gradient(90deg,#262626 0,#262626 11px,#2c2c2c 11px,#2c2c2c 12px);"></div>
<div class="abs" style="left:1154px;top:66px;width:11px;height:8px;background:#6e6e6e;"></div>
<!-- left bar -->
<div class="abs" style="left:0;top:64px;width:11px;height:736px;background:#212121;"></div>
<div class="abs" style="left:0;top:66px;width:6px;height:91px;background:linear-gradient(#3a3a3a 80%,#303030 80%);border-radius:0 2px 2px 0;"></div>
<div class="abs" style="left:0;top:161px;width:6px;height:93px;background:linear-gradient(#333 80%,#2c2c2c 80%);border-radius:0 2px 2px 0;"></div>
<div class="abs" style="left:0;top:258px;width:6px;height:92px;background:linear-gradient(#333 80%,#2c2c2c 80%);border-radius:0 2px 2px 0;"></div>
<div class="abs" style="left:0;top:354px;width:6px;height:92px;background:linear-gradient(#333 80%,#2c2c2c 80%);border-radius:0 2px 2px 0;"></div>
<div class="abs" style="left:0;top:450px;width:6px;height:91px;background:linear-gradient(#333 80%,#2c2c2c 80%);border-radius:0 2px 2px 0;"></div>
<div class="abs" style="left:0;top:548px;width:6px;height:96px;background:linear-gradient(#8ee000,#2cf000 25%,#00f23c 50%,#00f0b0 75%,#00d8ff);"></div>
<div class="abs" style="left:0;top:647px;width:4px;height:18px;background:#333;border-radius:0 2px 2px 0;"></div>
<div class="abs" style="left:0;top:670px;width:5px;height:45px;background:#ece4e0;border-radius:0 2px 2px 0;"></div>
<div class="abs" style="left:0;top:719px;width:4px;height:19px;background:#333;border-radius:0 2px 2px 0;"></div>
<div class="abs" style="left:0;top:743px;width:4px;height:19px;background:#f8912e;border-radius:0 2px 2px 0;"></div>
<div class="abs" style="left:0;top:767px;width:4px;height:18px;background:#333;border-radius:0 2px 2px 0;"></div>

<!-- TOOLBAR -->
<div class="abs" style="left:0;top:12px;width:5px;height:46px;background:#363636;border-radius:0 4px 4px 0;border:1px solid #232323;border-left:none;box-sizing:border-box;"></div>
<div class="btn grey" style="left:7px;top:12px;width:94px;height:46px;"><span class="lbl" style="left:15px;top:16px;">LightBox</span></div>
<div class="btn dark" style="left:103px;top:12px;width:94px;height:46px;"><span class="lbl" style="left:3px;top:16px;">Live Boolean</span></div>
<div class="abs" style="left:199px;top:12px;width:46px;height:46px;border-radius:5px;background:#f8932c;border:1px solid #2a0e04;box-sizing:border-box;box-shadow:inset 0 0 1px 0.5px #fbab5c;"></div>
<div class="abs" style="left:247px;top:12px;width:46px;height:46px;border-radius:5px;background:#f8932c;border:1px solid #2a0e04;box-sizing:border-box;box-shadow:inset 0 0 1px 0.5px #fbab5c;"></div>
<svg class="abs" style="left:199px;top:12px" width="96" height="46" viewBox="199 12 96 46" font-family="Liberation Sans, sans-serif">
<g fill="#3a0c04">
<rect x="212" y="23.2" width="2.8" height="2.6"/><rect x="212" y="35.2" width="2.8" height="2.6"/><rect x="223.2" y="35.2" width="2.8" height="2.6"/>
<rect x="216.3" y="23.9" width="11.5" height="1.1"/><rect x="212.9" y="27.1" width="1.1" height="7"/><rect x="216.3" y="35.9" width="5.5" height="1.1"/>
<path d="M225 33.6 L226.8 34.2 L230.4 27 L228.8 26.2 Z"/>
<rect x="268.2" y="24" width="1.9" height="4.6"/><rect x="268.2" y="30.6" width="1.9" height="2.4"/><rect x="268.2" y="34.9" width="1.9" height="3.9"/>
<rect x="261.3" y="30.8" width="3.7" height="1.9"/><rect x="273.2" y="30.8" width="3.8" height="1.9"/>
</g>
<rect x="229.2" y="23.1" width="2.8" height="2.6" fill="#c06a12"/>
<g font-size="9.8" font-weight="bold" fill="#3a0c04">
<text x="209.8" y="47.7" textLength="15.2" lengthAdjust="spacingAndGlyphs">Edit</text><text x="257.8" y="47.7" textLength="22.6" lengthAdjust="spacingAndGlyphs">Draw</text>
</g>
</svg>
<!-- Move / Scale / Rotate -->
<svg class="abs" style="left:296px;top:12px" width="140" height="46" viewBox="296 12 140 46" font-family="Liberation Sans, sans-serif">
<defs><filter id="sh" x="-20%" y="-20%" width="150%" height="150%"><feDropShadow dx="1" dy="1" stdDeviation="0.6" flood-color="#000" flood-opacity="0.8"/></filter></defs>
<g filter="url(#sh)">
<rect x="311" y="27" width="14" height="13" fill="#4c4c4c" stroke="#b4b4b4" stroke-width="0.9"/>
<rect x="317" y="21" width="14" height="13.5" fill="#cfcfcf"/>
<rect x="360" y="28" width="12.5" height="11.5" fill="#4c4c4c" stroke="#b4b4b4" stroke-width="0.9"/>
<rect x="365" y="21" width="14" height="13.5" fill="#cfcfcf"/>
<rect x="406" y="28" width="11" height="11" fill="#4c4c4c" stroke="#b4b4b4" stroke-width="0.9" transform="rotate(-22 411.5 33.5)"/>
<rect x="413" y="21" width="14" height="13.5" fill="#cfcfcf"/>
</g>
<g font-weight="bold" font-size="12" fill="#111" text-anchor="middle">
<text x="324.8" y="32.3">M</text><text x="372" y="32.3">S</text><text x="420.3" y="32.3">R</text>
</g>
<g font-size="10" fill="#d0d0d0" text-anchor="middle" filter="url(#sh)">
<text x="315.5" y="48">Move</text><text x="363" y="48">Scale</text><text x="413.8" y="48">Rotate</text>
</g>
</svg>
<!-- brown gyro button -->
<div class="abs" style="left:439px;top:12px;width:46px;height:46px;border-radius:4px;background:#87531f;border:1px solid #2a2018;box-shadow:inset 0 0 0 1px #94643a;box-sizing:border-box;"></div>
<svg class="abs" style="left:439px;top:12px" width="46" height="46" viewBox="439 12 46 46">
<g fill="none" stroke="#5a320e" stroke-width="1.5">
<circle cx="462.2" cy="34.7" r="11.2"/>
<path d="M462.2 23.6 C467.5 27.5 471 34 471.2 40.8 C466 43.2 458.5 43.2 453.8 40.8 C454 34 457 27.5 462.2 23.6 Z"/>
</g>
</svg>
<!-- grey S sphere -->
<div class="abs" style="left:488px;top:12px;width:44px;height:45px;border-radius:4px;background:#262626;"></div>
<svg class="abs" style="left:488px;top:12px" width="46" height="46" viewBox="488 12 46 46">
<circle cx="510" cy="35" r="13.6" fill="#6a6a6a"/>
<path d="M504.5 22.4 A13.8 13.8 0 0 0 505 47.8 C505.6 43 505.3 39 505.1 35 C504.9 32 502.8 30 503.2 27 C503.4 25 504 24 504.5 22.4 Z" fill="#2b2b2b"/>
<path d="M513.3 21.6 A13.8 13.8 0 0 1 512.4 48.6 C515 46 516.5 44.5 517 43 C518.5 40 518.6 37 518.1 35.6 C517 32 514.5 31 514.1 29 C513.5 27 513.4 24 513.3 21.6 Z" fill="#2b2b2b"/>
<circle cx="510" cy="35" r="14" fill="none" stroke="#7a7a7a" stroke-width="1.1"/>
</svg>


<!-- RGB / Z buttons -->
<div class="sm" style="left:536px;">Mrgb</div>
<div class="sm" style="left:599px;width:62px;background:#f8932c;border-color:#2a0e04;color:#4a1408;">Rgb</div>
<div class="sm" style="left:663px;">M</div>
<div class="sm" style="left:727px;">Zadd</div>
<div class="sm" style="left:791px;top:13px;">Zsub</div>
<div class="sm" style="left:855px;color:#5a5a5a;border-color:#262626;">Zcut</div>
<span class="lbl" style="left:539px;top:38px;">Rgb Intensity 100</span>
<div class="line" style="left:539px;top:53px;width:184px;background:linear-gradient(90deg,#3a3a3a,#9a9a9a 15%,#9a9a9a);"></div>
<div class="hnd" style="left:710px;top:51px;"></div>
<span class="lbl" style="left:737px;top:40px;">Z Intensity 2</span>
<div class="line" style="left:729px;top:55px;width:186px;background:linear-gradient(90deg,#3a3a3a,#9a9a9a 12%,#9a9a9a 60%,#333);"></div>
<div class="hnd" style="left:752px;top:52px;"></div>
<!-- brush S -->
<div class="abs" style="left:919px;top:12px;width:46px;height:46px;border-radius:4px;background:#262626;border:1px solid #1f1f1f;box-sizing:border-box;"></div>
<svg class="abs" style="left:919px;top:12px" width="46" height="46" viewBox="0 0 46 46" font-family="Liberation Sans, sans-serif">
<path d="M28.4 32.8 A11.5 11.5 0 1 1 29.2 17.2" fill="none" stroke="#c8c8c8" stroke-width="1.1"/>
<circle cx="20.3" cy="24.6" r="5.4" fill="none" stroke="#a0a0a0" stroke-width="0.9"/>
<path d="M20.3 22.4 V26.8 M18.1 24.6 H22.5" stroke="#c8c8c8" stroke-width="0.9"/>
<path d="M28.2 23.8 C29.6 21.2 30.6 18.2 33.4 16.5 C35 15.6 36.6 16.2 36.5 17.8 C36.3 20.6 33 22.6 28.2 23.8 Z" fill="#d4d4d4"/>
<path d="M35.2 15.2 L38 10.4 L38.5 16.8 Z" fill="#d4d4d4"/>
<text x="28.6" y="36" font-size="11.5" font-weight="bold" fill="#dcdcdc">S</text>
</svg>
<span class="lbl" style="left:971px;top:15px;">Focal Shift -59</span>
<div class="line" style="left:970px;top:30px;width:186px;background:linear-gradient(90deg,#3a3a3a,#9a9a9a 12%,#9a9a9a 70%,#333);"></div>
<div class="hnd" style="left:1002px;top:27px;"></div>
<span class="lbl" style="left:971px;top:38px;">Draw Size 9</span>
<div class="line" style="left:970px;top:53px;width:186px;background:linear-gradient(90deg,#3a3a3a,#9a9a9a 12%,#9a9a9a 70%,#333);"></div>
<div class="hnd" style="left:983px;top:50px;"></div>
<span class="lbl" style="left:1117px;top:36px;font-size:8.5px;font-weight:bold;color:#d0d0d0;line-height:9px;">Dynamic</span>
<!-- brush D -->
<div class="abs" style="left:1159px;top:12px;width:46px;height:46px;border-radius:4px;background:#262626;border:1px solid #1f1f1f;box-sizing:border-box;"></div>
<svg class="abs" style="left:1159px;top:12px" width="46" height="46" viewBox="0 0 46 46" font-family="Liberation Sans, sans-serif">
<path d="M28.4 32.8 A11.5 11.5 0 1 1 29.2 17.2" fill="none" stroke="#c8c8c8" stroke-width="1.1"/>
<circle cx="20.3" cy="24.6" r="5.4" fill="none" stroke="#a0a0a0" stroke-width="0.9"/>
<path d="M20.3 22.4 V26.8 M18.1 24.6 H22.5" stroke="#c8c8c8" stroke-width="0.9"/>
<path d="M28.2 23.8 C29.6 21.2 30.6 18.2 33.4 16.5 C35 15.6 36.6 16.2 36.5 17.8 C36.3 20.6 33 22.6 28.2 23.8 Z" fill="#d4d4d4"/>
<path d="M35.2 15.2 L38 10.4 L38.5 16.8 Z" fill="#d4d4d4"/>
<text x="28.3" y="36" font-size="11.5" font-weight="bold" fill="#dcdcdc">D</text>
</svg>
<span class="lbl" style="left:1211px;top:17px;">Act</span>
<span class="lbl" style="left:1211px;top:40px;">Tot</span>

</body>
</html>
